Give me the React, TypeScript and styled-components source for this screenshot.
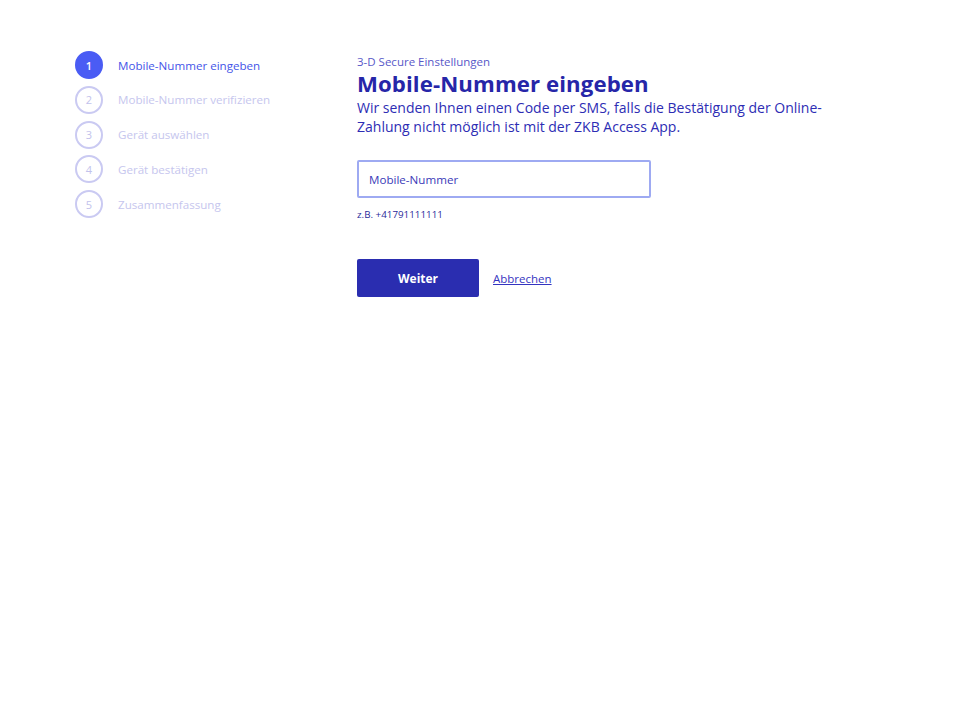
import React from "react";
import styled, { createGlobalStyle } from "styled-components";

const Global = createGlobalStyle`
  html, body { margin: 0; padding: 0; background: #ffffff; }
  body { font-family: "Open Sans", "Noto Sans", Arial, sans-serif; }
  * { box-sizing: border-box; }
`;

const Page = styled.div`
  display: flex;
  padding: 51px 0 0 75px;
  min-height: 720px;
`;

const Stepper = styled.ol`
  list-style: none;
  margin: 0;
  padding: 0;
  width: 282px;
  display: flex;
  flex-direction: column;
  gap: 6.75px;
`;

const StepItem = styled.li`
  display: flex;
  align-items: center;
  gap: 15px;
  height: 28px;
`;

const StepCircle = styled.span<{ $active?: boolean }>`
  width: 28px;
  height: 28px;
  border-radius: 50%;
  display: flex;
  align-items: center;
  justify-content: center;
  font-size: 11px;
  font-weight: ${(p) => (p.$active ? 600 : 400)};
  color: ${(p) => (p.$active ? "#ffffff" : "#c2c2ec")};
  background: ${(p) => (p.$active ? "#4a5cf4" : "#ffffff")};
  border: 2px solid ${(p) => (p.$active ? "#4a5cf4" : "#cacaf2")};
  flex-shrink: 0;
`;

const StepLabel = styled.span<{ $active?: boolean }>`
  font-size: 11.6px;
  color: ${(p) => (p.$active ? "#4455e8" : "#c6c6ee")};
`;

const Main = styled.div`
  display: flex;
  flex-direction: column;
  width: 540px;
`;

const Overline = styled.div`
  font-size: 11.5px;
  color: #5858c8;
  line-height: 16px;
  margin-top: 3px;
`;

const Title = styled.h1`
  margin: 0;
  font-size: 22.2px;
  font-weight: 700;
  line-height: 28px;
  color: #2626a8;
  letter-spacing: 0.1px;
`;

const Lead = styled.p`
  margin: 0;
  font-size: 14px;
  line-height: 19px;
  color: #2d2db4;
`;

const Field = styled.div`
  margin-top: 24px;
  display: flex;
  flex-direction: column;
`;

const Input = styled.div`
  width: 294px;
  height: 38px;
  border: 2px solid #9eaaf2;
  border-radius: 2px;
  display: flex;
  align-items: center;
  padding-left: 10px;
  font-size: 11.6px;
  color: #3a3ab8;
`;

const Hint = styled.div`
  margin-top: 10px;
  font-size: 9.8px;
  color: #2a2a9a;
  line-height: 14px;
`;

const Actions = styled.div`
  margin-top: 37px;
  display: flex;
  align-items: center;
  gap: 14px;
`;

const PrimaryButton = styled.button`
  width: 122px;
  height: 38px;
  border: none;
  border-radius: 2px;
  background: #2a2db0;
  color: #ffffff;
  font-family: inherit;
  font-size: 12px;
  font-weight: 700;
  cursor: pointer;
`;

const TextLink = styled.a`
  font-size: 11.5px;
  color: #3434c0;
  text-decoration: underline;
  cursor: pointer;
`;

const steps = [
  "Mobile-Nummer eingeben",
  "Mobile-Nummer verifizieren",
  "Gerät auswählen",
  "Gerät bestätigen",
  "Zusammenfassung",
];

export default function App() {
  return (
    <>
      <Global />
      <Page>
        <Stepper>
          {steps.map((s, i) => (
            <StepItem key={s}>
              <StepCircle $active={i === 0}>{i + 1}</StepCircle>
              <StepLabel $active={i === 0}>{s}</StepLabel>
            </StepItem>
          ))}
        </Stepper>
        <Main>
          <Overline>3-D Secure Einstellungen</Overline>
          <Title>Mobile-Nummer eingeben</Title>
          <Lead>
            Wir senden Ihnen einen Code per SMS, falls die Bestätigung der Online-
            <br />
            Zahlung nicht möglich ist mit der ZKB Access App.
          </Lead>
          <Field>
            <Input>Mobile-Nummer</Input>
            <Hint>z.B. +41791111111</Hint>
          </Field>
          <Actions>
            <PrimaryButton>Weiter</PrimaryButton>
            <TextLink>Abbrechen</TextLink>
          </Actions>
        </Main>
      </Page>
    </>
  );
}
